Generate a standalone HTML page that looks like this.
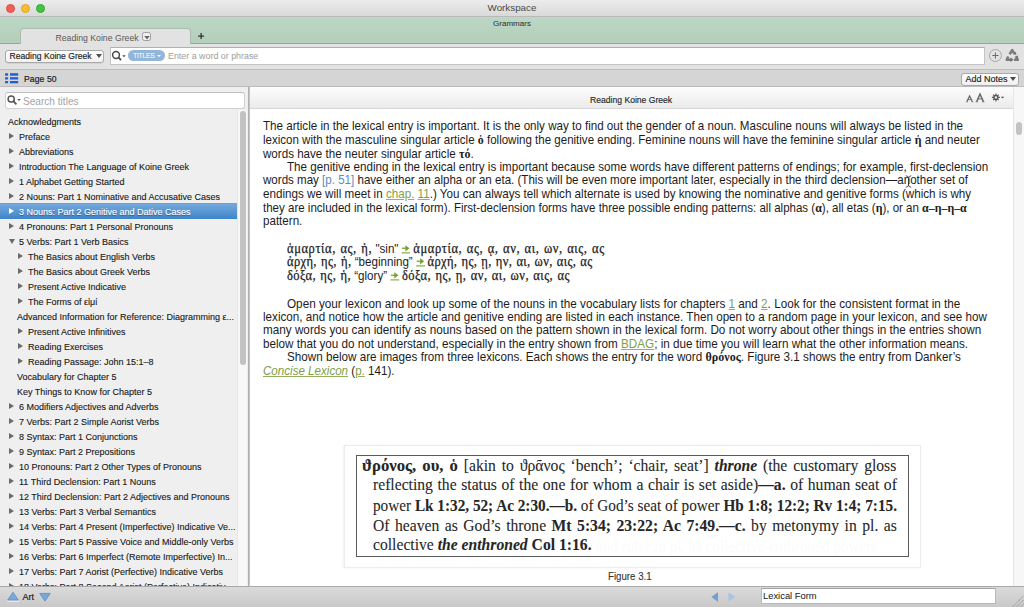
<!DOCTYPE html>
<html><head><meta charset="utf-8">
<style>
*{margin:0;padding:0;box-sizing:border-box}
html,body{width:1024px;height:607px;overflow:hidden;background:#e3e3e3;font-family:"Liberation Sans",sans-serif;color:#222}
.a{position:absolute;white-space:nowrap}
#title{left:0;top:0;width:1024px;height:16.6px;background:linear-gradient(#ececec,#d9d9d9);border-bottom:1px solid #b9b9b9}
.tl{position:absolute;top:3.6px;width:9.4px;height:9.4px;border-radius:50%}
#green{left:0;top:16.6px;width:1024px;height:27.4px;background:linear-gradient(#bcd8c4,#b3cfbb);border-bottom:1px solid #92a898;box-shadow:0 1px 1px rgba(0,0,0,.08)}
#tab{left:20px;top:28px;width:171px;height:17px;background:#e2e2e2;border:1px solid #a9bcae;border-bottom:none;border-radius:4px 4px 0 0}
#toolbar{left:0;top:44px;width:1024px;height:25.8px;background:#e2e2e2;border-bottom:1px solid #bdbdbd}
#pagebar{left:0;top:69.8px;width:1024px;height:17.2px;background:#d5d5d5;border-bottom:1px solid #bcbcbc}
#sidebar{left:0;top:87px;width:248px;height:499px;background:#efefef;overflow:hidden}
#divider{left:248px;top:87px;width:2px;height:499px;background:#c4c4c4;border-left:1px solid #b0b0b0}
#content{left:250px;top:87px;width:763px;height:499px;background:#fff;overflow:hidden}
#chead{left:0;top:0;width:763px;height:22px;background:linear-gradient(#fdfdfd,#ebebeb);border-bottom:1px solid #d6d6d6}
#vscroll{left:1013px;top:87px;width:11px;height:499px;background:#f7f7f7;border-left:1px solid #e6e6e6}
#bottombar{left:0;top:586px;width:1024px;height:21px;background:linear-gradient(#dadada,#c9c9c9);border-top:1px solid #a9a9a9}
.t{position:absolute;top:0}
.row.sel{color:#fff;-webkit-text-stroke:0.12px #fff;text-shadow:0 1px 1px rgba(0,0,0,.4)}
.row.sel .tri{border-left-color:#fff}
.row{position:absolute;left:0;height:15px;line-height:15px;font-size:9px;color:#1a1a1a;-webkit-text-stroke:0.12px #1a1a1a;white-space:nowrap;width:237px}
.tri{position:absolute;top:3.3px;width:0;height:0;border-top:3.3px solid transparent;border-bottom:3.3px solid transparent;border-left:5.8px solid #6a6a6a}
.trd{position:absolute;top:4.4px;width:0;height:0;border-left:3.3px solid transparent;border-right:3.3px solid transparent;border-top:5.8px solid #6a6a6a}
.ln{position:absolute;left:13px;font-size:12.6px;line-height:13.6px;height:13.6px;transform:scaleX(0.9206);transform-origin:0 0;color:#1c1c1c;white-space:nowrap}
.gk{font-family:"Liberation Serif",serif;font-size:13.6px;letter-spacing:0.65px;word-spacing:0.8px;-webkit-text-stroke:0.25px #1c1c1c}
.gb{font-family:"Liberation Serif",serif;font-weight:bold;font-size:13px}
.arr{display:inline-block;vertical-align:-1px;margin:0 3.2px 0 3px}
.lk{color:#80a046;text-decoration:underline;text-decoration-color:#94b060}
.fl{position:absolute;font-family:"Liberation Serif",serif;font-size:16.5px;line-height:20px;color:#262626;transform-origin:0 0;-webkit-text-stroke:0.08px #262626;white-space:nowrap;text-align:justify;text-align-last:justify}
.fl.last{text-align-last:left}
.gk2{font-weight:bold;font-size:17.6px}
.bl{color:#5a8ac8}
</style></head><body>
<div id="title" class="a">
  <div class="tl" style="left:5.8px;background:#f25f58;border:0.5px solid #df4c45"></div>
  <div class="tl" style="left:20.8px;background:#fbbe2e;border:0.5px solid #e0a22a"></div>
  <div class="tl" style="left:35.8px;background:#3fc63e;border:0.5px solid #2fa82f"></div>
  <div class="a" style="left:0;width:1024px;top:2.4px;text-align:center;font-size:9.8px;line-height:12px;color:#4a4a4a">Workspace</div>
</div>
<div id="green" class="a">
  <div class="a" style="left:0;width:1024px;top:2px;text-align:center;font-size:8px;line-height:10px;color:#36403a;-webkit-text-stroke:0.1px #36403a">Grammars</div>
</div>
<div id="tab" class="a">
  <div class="a" style="left:34.5px;top:3px;font-size:8.7px;line-height:12px;color:#5a5a5a">Reading Koine Greek</div>
  <div class="a" style="left:120.6px;top:3.4px;width:9.2px;height:8.2px;background:#f0f0f0;border:1px solid #9c9c9c;border-radius:2.5px"></div>
  <svg class="a" style="left:121.6px;top:5.5px" width="8" height="6" viewBox="0 0 8 6"><path d="M1.2 0.9H6.8L4 4.6z" fill="#666"/></svg>
</div>
<svg class="a" style="left:197px;top:32px;z-index:2" width="9" height="9" viewBox="0 0 9 9"><path d="M4.1 1.1v6M1.1 4.1h6" stroke="#333" stroke-width="1.3"/></svg>
<div id="toolbar" class="a">
  <div class="a" id="popup" style="left:5px;top:5.5px;width:99px;height:13px;background:linear-gradient(#fdfdfd,#f1f1f1);border:1px solid #a9a9a9;border-radius:3px;box-shadow:0 0.5px 0.5px rgba(0,0,0,.12)"></div>
  <div class="a" style="left:9.5px;top:5.5px;font-size:8.6px;line-height:13px;color:#1d1d1d;-webkit-text-stroke:0.15px #1d1d1d">Reading Koine Greek</div>
  <div class="a" style="left:96px;top:10.3px;width:0;height:0;border-left:3px solid transparent;border-right:3px solid transparent;border-top:4.2px solid #505050"></div>
  <div class="a" id="sbox" style="left:109.5px;top:3px;width:875px;height:17.5px;background:#fff;border:1px solid #c3c3c3;border-top-color:#b0b0b0"></div>
  <svg class="a" style="left:111px;top:5.5px" width="16" height="12" viewBox="0 0 16 12"><circle cx="5" cy="5" r="3.4" fill="none" stroke="#4a4a4a" stroke-width="1.5"/><line x1="7.4" y1="7.4" x2="10" y2="10.2" stroke="#4a4a4a" stroke-width="1.8"/><path d="M11.3 5.2h3.4l-1.7 2z" fill="#4a4a4a"/></svg>
  <div class="a" style="left:128px;top:6px;width:37px;height:11.4px;background:#92b5da;border-radius:6px"></div>
  <div class="a" style="left:133px;top:6.2px;font-size:7px;line-height:11px;color:#fff;letter-spacing:-0.35px">TITLES</div>
  <div class="a" style="left:156.5px;top:10.6px;width:0;height:0;border-left:2.2px solid transparent;border-right:2.2px solid transparent;border-top:2.6px solid #fff"></div>
  <div class="a" style="left:168px;top:5.5px;font-size:8.9px;line-height:13px;color:#9d9d9d">Enter a word or phrase</div>
  <svg class="a" style="left:988px;top:4px" width="15" height="15" viewBox="0 0 15 15"><circle cx="7.4" cy="7.5" r="6" fill="none" stroke="#a0a0a0" stroke-width="0.9"/><path d="M7.4 4.4v6.2M4.3 7.5h6.2" stroke="#6a6a6a" stroke-width="1"/></svg>
  <svg class="a" style="left:1005px;top:4.2px" width="15" height="15" viewBox="0 0 15 15"><g fill="none" stroke="#7c7c7c" stroke-width="2.6" stroke-linejoin="round"><path d="M4.6 6.2L7.2 2.2L9.2 5.4"/><path d="M3.2 8.6L1.8 11.8L6 11.8"/><path d="M9 11.8L12.8 11.8L11.2 8.8"/></g><g fill="#6f6f6f"><path d="M8 6.6L11.4 6.8L10.8 3.8z"/><path d="M5.6 9.6L5.4 14L8.6 11.8z"/><path d="M13.2 7.6L9.4 8.8L12.6 10.6z"/></g></svg>
</div>
<div id="pagebar" class="a">
  <svg class="a" style="left:5px;top:3.3px" width="14" height="11" viewBox="0 0 14 11"><g fill="#1f5fd6"><rect x="0" y="0.2" width="3.1" height="2.5" rx="0.6"/><rect x="0" y="4.2" width="3.1" height="2.3" rx="0.6"/><rect x="0" y="8" width="3.1" height="2.3" rx="0.6"/><rect x="5" y="0.2" width="8.2" height="2.5"/><rect x="5" y="4.2" width="8.2" height="2.3"/><rect x="5" y="8" width="8.2" height="2.3"/></g></svg>
  <div class="a" style="left:24px;top:2.1px;font-size:8.6px;line-height:14px;color:#1e1e1e;letter-spacing:0.1px;-webkit-text-stroke:0.2px #1e1e1e">Page 50</div>
  <div class="a" style="left:961.3px;top:3.3px;width:57.9px;height:13.2px;background:linear-gradient(#fdfdfd,#f0f0f0);border:1px solid #a9a9a9;border-radius:3px"></div>
  <div class="a" style="left:965.5px;top:3.5px;font-size:9px;line-height:12.5px;color:#1d1d1d;-webkit-text-stroke:0.15px #1d1d1d">Add Notes</div>
  <div class="a" style="left:1010.3px;top:7.2px;width:0;height:0;border-left:3.1px solid transparent;border-right:3.1px solid transparent;border-top:4.4px solid #4a4a4a"></div>
</div>
<div id="sidebar" class="a">
  <svg class="a" style="left:7.2px;top:8.4px;z-index:2" width="15" height="11" viewBox="0 0 15 11"><circle cx="4.2" cy="4" r="3.1" fill="none" stroke="#555" stroke-width="1.5"/><line x1="6.3" y1="6.2" x2="9.4" y2="9.4" stroke="#555" stroke-width="1.8"/><path d="M10.2 4.1h3.6l-1.8 2z" fill="#555"/></svg>
  <div class="a" id="sfield" style="left:5px;top:5.3px;width:240px;height:16.3px;background:#fff;border:1px solid #d0d0d0;border-top-color:#bdbdbd;border-radius:3px"></div>
  <div class="a" style="left:23px;top:8.5px;font-size:10.1px;line-height:12px;color:#a4a4a4">Search titles</div>
<div class="row" style="top:27.9px"><span class="t" style="left:8px">Acknowledgments</span></div>
<div class="row" style="top:42.9px"><i class="tri" style="left:9px"></i><span class="t" style="left:19px">Preface</span></div>
<div class="row" style="top:57.9px"><i class="tri" style="left:9px"></i><span class="t" style="left:19px">Abbreviations</span></div>
<div class="row" style="top:72.9px"><i class="tri" style="left:9px"></i><span class="t" style="left:19px">Introduction The Language of Koine Greek</span></div>
<div class="row" style="top:87.9px"><i class="tri" style="left:9px"></i><span class="t" style="left:19px">1 Alphabet Getting Started</span></div>
<div class="row" style="top:102.9px"><i class="tri" style="left:9px"></i><span class="t" style="left:19px">2 Nouns: Part 1 Nominative and Accusative Cases</span></div>
<div class="a" style="left:0;top:116px;width:237px;height:16px;background:linear-gradient(#74a9dc,#3d84ca);border-top:1px solid #6aa0d6"></div>
<div class="row sel" style="top:117.9px"><i class="tri" style="left:9px"></i><span class="t" style="left:19px">3 Nouns: Part 2 Genitive and Dative Cases</span></div>
<div class="row" style="top:132.9px"><i class="tri" style="left:9px"></i><span class="t" style="left:19px">4 Pronouns: Part 1 Personal Pronouns</span></div>
<div class="row" style="top:147.9px"><i class="trd" style="left:9px"></i><span class="t" style="left:19px">5 Verbs: Part 1 Verb Basics</span></div>
<div class="row" style="top:162.9px"><i class="tri" style="left:18px"></i><span class="t" style="left:28px">The Basics about English Verbs</span></div>
<div class="row" style="top:177.9px"><i class="tri" style="left:18px"></i><span class="t" style="left:28px">The Basics about Greek Verbs</span></div>
<div class="row" style="top:192.9px"><i class="tri" style="left:18px"></i><span class="t" style="left:28px">Present Active Indicative</span></div>
<div class="row" style="top:207.9px"><i class="tri" style="left:18px"></i><span class="t" style="left:28px">The Forms of εἰμί</span></div>
<div class="row" style="top:222.9px"><span class="t" style="left:17px">Advanced Information for Reference: Diagramming ε...</span></div>
<div class="row" style="top:237.9px"><i class="tri" style="left:18px"></i><span class="t" style="left:28px">Present Active Infinitives</span></div>
<div class="row" style="top:252.9px"><i class="tri" style="left:18px"></i><span class="t" style="left:28px">Reading Exercises</span></div>
<div class="row" style="top:267.9px"><i class="tri" style="left:18px"></i><span class="t" style="left:28px">Reading Passage: John 15:1–8</span></div>
<div class="row" style="top:282.9px"><span class="t" style="left:17px">Vocabulary for Chapter 5</span></div>
<div class="row" style="top:297.9px"><span class="t" style="left:17px">Key Things to Know for Chapter 5</span></div>
<div class="row" style="top:312.9px"><i class="tri" style="left:9px"></i><span class="t" style="left:19px">6 Modifiers Adjectives and Adverbs</span></div>
<div class="row" style="top:327.9px"><i class="tri" style="left:9px"></i><span class="t" style="left:19px">7 Verbs: Part 2 Simple Aorist Verbs</span></div>
<div class="row" style="top:342.9px"><i class="tri" style="left:9px"></i><span class="t" style="left:19px">8 Syntax: Part 1 Conjunctions</span></div>
<div class="row" style="top:357.9px"><i class="tri" style="left:9px"></i><span class="t" style="left:19px">9 Syntax: Part 2 Prepositions</span></div>
<div class="row" style="top:372.9px"><i class="tri" style="left:9px"></i><span class="t" style="left:19px">10 Pronouns: Part 2 Other Types of Pronouns</span></div>
<div class="row" style="top:387.9px"><i class="tri" style="left:9px"></i><span class="t" style="left:19px">11 Third Declension: Part 1 Nouns</span></div>
<div class="row" style="top:402.9px"><i class="tri" style="left:9px"></i><span class="t" style="left:19px">12 Third Declension: Part 2 Adjectives and Pronouns</span></div>
<div class="row" style="top:417.9px"><i class="tri" style="left:9px"></i><span class="t" style="left:19px">13 Verbs: Part 3 Verbal Semantics</span></div>
<div class="row" style="top:432.9px"><i class="tri" style="left:9px"></i><span class="t" style="left:19px">14 Verbs: Part 4 Present (Imperfective) Indicative Ve...</span></div>
<div class="row" style="top:447.9px"><i class="tri" style="left:9px"></i><span class="t" style="left:19px">15 Verbs: Part 5 Passive Voice and Middle-only Verbs</span></div>
<div class="row" style="top:462.9px"><i class="tri" style="left:9px"></i><span class="t" style="left:19px">16 Verbs: Part 6 Imperfect (Remote Imperfective) In...</span></div>
<div class="row" style="top:477.9px"><i class="tri" style="left:9px"></i><span class="t" style="left:19px">17 Verbs: Part 7 Aorist (Perfective) Indicative Verbs</span></div>
<div class="row" style="top:492.9px"><i class="tri" style="left:9px"></i><span class="t" style="left:19px">18 Verbs: Part 8 Second Aorist (Perfective) Indicativ...</span></div>

  <div class="a" id="strack" style="left:237.3px;top:22.5px;width:10px;height:476.5px;background:#f8f8f8;border-left:1px solid #e6e6e6"></div>
  <div class="a" id="sthumb" style="left:240.3px;top:24px;width:5.8px;height:253.5px;background:#c2c2c2;border-radius:3px"></div>
</div>
<div id="divider" class="a"></div>
<div id="content" class="a"><div id="chead" class="a">
  <div class="a" style="left:340px;top:6.8px;font-size:8.6px;line-height:12px;color:#2a2a2a;-webkit-text-stroke:0.15px #2a2a2a">Reading Koine Greek</div>
  <svg class="a" style="left:710px;top:1px" width="50" height="20" viewBox="960 88 50 20"><g fill="none" stroke="#686868" stroke-linejoin="miter"><path d="M966.9 101.6L969.6 96L972.3 101.6" stroke-width="1.25"/><path d="M968 99.6h3.3" stroke-width="0.9"/><path d="M965.9 101.8h2.2M971.3 101.8h2.1" stroke-width="0.7"/><path d="M976.7 101.6L980 94L983.4 101.6" stroke-width="1.5"/><path d="M978 98.9h4" stroke-width="1"/><path d="M975.6 101.8h2.5M981.9 101.8h2.6" stroke-width="0.8"/></g><g fill="#575757"><circle cx="995.9" cy="97.4" r="2.6"/><g stroke="#575757" stroke-width="1.2"><path d="M995.9 93.4v8M991.9 97.4h8M993.1 94.6l5.6 5.6M998.7 94.6l-5.6 5.6"/></g></g><circle cx="995.9" cy="97.4" r="1.2" fill="#f0f0f0"/><path d="M1000.9 96.7h3.4l-1.7 1.8z" fill="#4f4f4f"/></svg>
</div>
<div class="ln" style="top:32.8px;left:13px;transform:scaleX(0.9217)">The article in the lexical entry is important. It is the only way to find out the gender of a noun. Masculine nouns will always be listed in the</div>
<div class="ln" style="top:46.4px;left:13px;transform:scaleX(0.9160)">lexicon with the masculine singular article <span class="gb">ὁ</span> following the genitive ending. Feminine nouns will have the feminine singular article <span class="gb">ἡ</span> and neuter</div>
<div class="ln" style="top:60.0px;left:13px">words have the neuter singular article <span class="gb">τό</span>.</div>
<div class="ln" style="top:73.6px;left:37px;transform:scaleX(0.9226)">The genitive ending in the lexical entry is important because some words have different patterns of endings; for example, first-declension</div>
<div class="ln" style="top:87.2px;left:13px;transform:scaleX(0.9180)">words may <span class="bl">[p. 51]</span> have either an alpha or an eta. (This will be even more important later, especially in the third declension—another set of</div>
<div class="ln" style="top:100.8px;left:13px;transform:scaleX(0.9241)">endings we will meet in <span class="lk">chap.</span> <span class="lk">11</span>.) You can always tell which alternate is used by knowing the nominative and genitive forms (which is why</div>
<div class="ln" style="top:114.4px;left:13px;transform:scaleX(0.9151)">they are included in the lexical form). First-declension forms have three possible ending patterns: all alphas (<span class="gb">α</span>), all etas (<span class="gb">η</span>), or an <span class="gb">α–η–η–α</span></div>
<div class="ln" style="top:128.0px;left:13px">pattern.</div>
<div class="ln" style="top:154.7px;left:37px"><span class="gk">ἁμαρτία, ας, ἡ,</span> "sin"<svg class="arr" width="10" height="11" viewBox="0 0 10 11"><path d="M0.8 5.3h4.6" stroke="#8db04c" stroke-width="1.6"/><path d="M4.6 2.2L9 5.3L4.6 8.4z" fill="#75a02c"/><path d="M0.3 9.9h9.6" stroke="#8fb050" stroke-width="1.3"/></svg><span class="gk">ἁμαρτία, ας, ᾳ, αν, αι, ων, αις, ας</span></div>
<div class="ln" style="top:168.3px;left:37px"><span class="gk" style="letter-spacing:0.4px">ἀρχή, ης, ἡ,</span> “beginning”<svg class="arr" width="10" height="11" viewBox="0 0 10 11"><path d="M0.8 5.3h4.6" stroke="#8db04c" stroke-width="1.6"/><path d="M4.6 2.2L9 5.3L4.6 8.4z" fill="#75a02c"/><path d="M0.3 9.9h9.6" stroke="#8fb050" stroke-width="1.3"/></svg><span class="gk" style="letter-spacing:0.36px">ἀρχή, ης, ῃ, ην, αι, ων, αις, ας</span></div>
<div class="ln" style="top:181.9px;left:37px"><span class="gk" style="letter-spacing:0.45px">δόξα, ης, ἡ,</span> “glory”<svg class="arr" width="10" height="11" viewBox="0 0 10 11"><path d="M0.8 5.3h4.6" stroke="#8db04c" stroke-width="1.6"/><path d="M4.6 2.2L9 5.3L4.6 8.4z" fill="#75a02c"/><path d="M0.3 9.9h9.6" stroke="#8fb050" stroke-width="1.3"/></svg><span class="gk" style="letter-spacing:0.5px">δόξα, ης, ῃ, αν, αι, ων, αις, ας</span></div>
<div class="ln" style="top:210.8px;left:37px;transform:scaleX(0.9302)">Open your lexicon and look up some of the nouns in the vocabulary lists for chapters <span class="lk">1</span> and <span class="lk">2</span>. Look for the consistent format in the</div>
<div class="ln" style="top:223.7px;left:13px;transform:scaleX(0.9251)">lexicon, and notice how the article and genitive ending are listed in each instance. Then open to a random page in your lexicon, and see how</div>
<div class="ln" style="top:237.3px;left:13px;transform:scaleX(0.9303)">many words you can identify as nouns based on the pattern shown in the lexical form. Do not worry about other things in the entries shown</div>
<div class="ln" style="top:250.9px;left:13px;transform:scaleX(0.9266)">below that you do not understand, especially in the entry shown from <span class="lk">BDAG</span>; in due time you will learn what the other information means.</div>
<div class="ln" style="top:263.4px;left:37px;transform:scaleX(0.9269)">Shown below are images from three lexicons. Each shows the entry for the word <span class="gb">θρόνος</span>. Figure 3.1 shows the entry from Danker’s</div>
<div class="ln" style="top:278.1px;left:13px"><span class="lk"><i>Concise Lexicon</i></span> (<span class="lk">p.</span> 141).</div>
<div class="a" id="figout" style="left:94px;top:357.5px;width:576.5px;height:123.3px;background:#fff;border:1px solid #ececec;box-shadow:-1px 0 2px rgba(0,0,0,.06)"></div>
<div class="a" id="figin" style="left:105.5px;top:368px;width:553.5px;height:101.5px;border:1px solid #5a5a5a;border-top-width:1.5px"></div>
<div class="a" style="left:346px;top:452px;font-family:'Liberation Serif',serif;font-size:16px;line-height:16px;color:#fbfbfb;transform:scaleX(0.95);transform-origin:0 0">and ruler in pl. as collective enthroned powers</div>
<div class="fl" style="top:368px;left:112px;width:563.6px;transform:scaleX(0.948)"><b class="gk2">ϑρόνος, ου, ὁ</b> [akin to ϑρᾶνος ‘bench’; ‘chair, seat’] <b><i>throne</i></b> (the customary gloss</div>
<div class="fl" style="top:387.9px;left:122.5px;width:552.6px;transform:scaleX(0.948)">reflecting the status of the one for whom a chair is set aside)<b>—a.</b> of human seat of</div>
<div class="fl" style="top:408.6px;left:122.5px;width:567.3px;transform:scaleX(0.9235)">power <b>Lk 1:32, 52; Ac 2:30.—b.</b> of God’s seat of power <b>Hb 1:8; 12:2; Rv 1:4; 7:15.</b></div>
<div class="fl" style="top:428.5px;left:122.5px;width:552.6px;transform:scaleX(0.948)">Of heaven as God’s throne <b>Mt 5:34; 23:22; Ac 7:49.—c.</b> by metonymy in pl. as</div>
<div class="fl last" style="top:448.4px;left:122.5px;width:240px;transform:scaleX(0.948)">collective <b><i>the enthroned</i></b> <b>Col 1:16.</b></div>

<div class="a" style="left:358.3px;top:483px;font-size:10.9px;line-height:12px;color:#333;transform:scaleX(0.89);transform-origin:0 0;-webkit-text-stroke:0.1px #333">Figure 3.1</div>
</div>
<svg class="a" style="left:904.7px;top:174.8px;z-index:5" width="7" height="13" viewBox="0 0 7 13"><path d="M0.8 0.7Q3.5 1.2 3.5 3V10Q3.5 11.8 0.8 12.3M6.2 0.7Q3.5 1.2 3.5 3V10Q3.5 11.8 6.2 12.3" fill="none" stroke="#3a3a3a" stroke-width="0.9"/></svg>
<div id="vscroll" class="a"><div class="a" style="left:1.8px;top:34.5px;width:6px;height:13px;background:#c3c3c3;border-radius:3px"></div></div>
<div id="bottombar" class="a">
  <svg class="a" style="left:6px;top:4.2px" width="14" height="11" viewBox="0 0 14 11"><path d="M7 1.2L12.3 9H1.7z" fill="#78a8db" stroke="#5b8fc4" stroke-width="0.8"/><path d="M1 10.3h12" stroke="#f2f2f2" stroke-width="0.8"/></svg>
  <div class="a" style="left:22.5px;top:4px;font-size:9px;line-height:13px;color:#1e1e1e;-webkit-text-stroke:0.2px #1e1e1e">Art</div>
  <svg class="a" style="left:38px;top:5px" width="14" height="11" viewBox="0 0 14 11"><path d="M1.7 1.4H12.3L7 9.2z" fill="#78a8db" stroke="#5b8fc4" stroke-width="0.8"/></svg>
  <svg class="a" style="left:710px;top:4px" width="10" height="12" viewBox="0 0 10 12"><path d="M8 1.2V10.8L1.3 6z" fill="#6f9fd3"/></svg>
  <svg class="a" style="left:726.5px;top:4px" width="10" height="12" viewBox="0 0 10 12"><path d="M1.5 1.2V10.8L8.2 6z" fill="#a9c3e2"/></svg>
  <div class="a" style="left:760.5px;top:1.4px;width:235px;height:16px;background:#fff;border:1px solid #b9b9b9;border-top-color:#a4a4a4"></div>
  <div class="a" style="left:763px;top:1px;font-size:9.4px;line-height:15px;color:#1e1e1e;-webkit-text-stroke:0.05px #1e1e1e">Lexical Form</div>
  <svg class="a" style="left:1011px;top:8px" width="13" height="12" viewBox="0 0 13 12"><path d="M1.5 12L12.5 1M5.5 12L12.5 5M9.5 12L12.5 9" stroke="#8a8a8a" stroke-width="0.9" stroke-dasharray="1.2 0.5"/></svg>
</div>
</body></html>
